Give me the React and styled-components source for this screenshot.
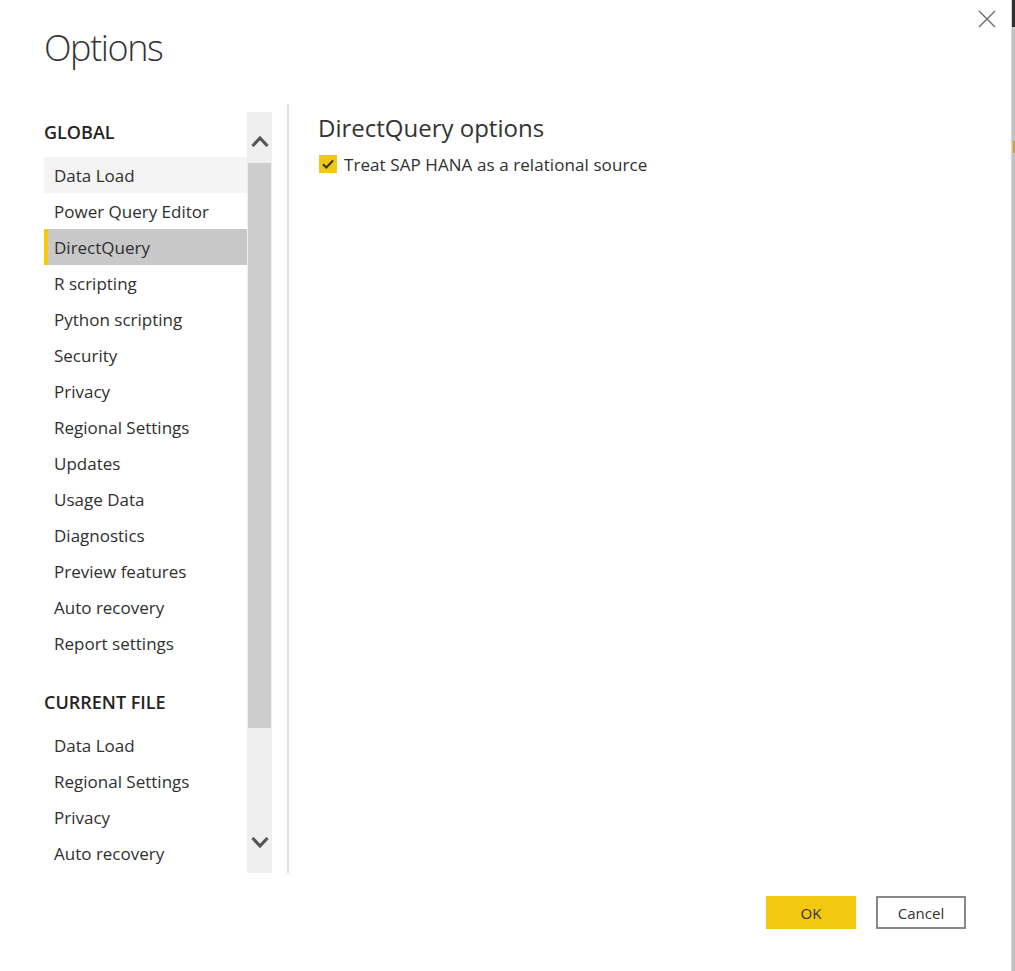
import React from "react";
import styled, { createGlobalStyle } from "styled-components";

const GlobalStyle = createGlobalStyle`
    html, body {
        margin: 0;
        padding: 0;
        background: #ffffff;
    }
    body {
        font-family: "Open Sans", "Liberation Sans", sans-serif;
        color: #333333;
    }
`;

const Page = styled.div`
    display: flex;
    width: 1015px;
    height: 971px;
    overflow: hidden;
`;

const Dialog = styled.div`
    display: flex;
    flex-direction: column;
    width: 1011px;
    height: 971px;
    background: #ffffff;
`;

const BackEdge = styled.div`
    display: flex;
    flex-direction: column;
    width: 4px;
    height: 971px;
    border-left: 1px solid #d6d6d6;
    box-sizing: border-box;
    background: #c3c3c3;
`;

const EdgeTop = styled.div`
    height: 27px;
    background: #2e2e2e;
`;

const EdgeMark = styled.div`
    align-self: flex-end;
    width: 2px;
    height: 12px;
    margin-top: 114px;
    background: #d99a3a;
`;

const Header = styled.div`
    display: flex;
    justify-content: space-between;
    align-items: flex-start;
    height: 104px;
    padding: 0 15px 0 44px;
`;

const Title = styled.h1`
    margin: 28px 0 0;
    font-weight: 300;
    font-size: 36px;
    line-height: 40px;
    letter-spacing: -1.4px;
    color: #333333;
`;

const CloseButton = styled.button`
    display: flex;
    margin-top: 10px;
    padding: 0;
    border: 0;
    background: none;
    cursor: pointer;
`;

const Body = styled.div`
    display: flex;
    height: 769px;
    padding-left: 44px;
`;

const NavPane = styled.div`
    display: flex;
    margin-top: 8px;
    height: 761px;
`;

const NavList = styled.div`
    width: 203px;
    display: flex;
    flex-direction: column;
`;

const GroupHeading = styled.div`
    display: flex;
    align-items: center;
    height: 40px;
    margin: ${(p) => (p.$first ? "0" : "21px")} 0 5px;
    font-size: 18px;
    font-weight: 600;
    color: #252423;
`;

const NavItem = styled.div`
    display: flex;
    align-items: center;
    height: 36px;
    padding-left: 6px;
    border-left: 4px solid ${(p) => (p.$selected ? "#f2c811" : "transparent")};
    font-size: 17px;
    color: #2f2f2f;
    background: ${(p) => (p.$selected ? "#c8c8c8" : p.$hover ? "#f4f4f4" : "transparent")};
    box-sizing: border-box;
`;

const ScrollTrack = styled.div`
    display: flex;
    flex-direction: column;
    width: 25px;
    background: #efefef;
`;

const ScrollTop = styled.div`
    display: flex;
    justify-content: center;
    align-items: flex-start;
    height: 51px;
    padding-top: 23px;
    box-sizing: border-box;
`;

const ScrollThumb = styled.div`
    height: 565px;
    margin: 0 1px;
    background: #cdcdcd;
`;

const ScrollRest = styled.div`
    flex: 1;
    display: flex;
    align-items: flex-end;
    justify-content: center;
    padding-bottom: 24px;
`;

const Divider = styled.div`
    width: 2px;
    margin-left: 15px;
    background: #e1e1e1;
`;

const Content = styled.div`
    display: flex;
    flex-direction: column;
    padding: 8px 0 0 29px;
`;

const SectionTitle = styled.h2`
    margin: 0;
    font-size: 24px;
    font-weight: 400;
    line-height: 32px;
    color: #333333;
`;

const CheckRow = styled.label`
    display: flex;
    align-items: center;
    gap: 7px;
    height: 24px;
    margin-top: 8px;
    font-size: 17px;
    letter-spacing: 0.08px;
    color: #2f2f2f;
`;

const CheckBox = styled.span`
    display: flex;
    width: 18px;
    height: 18px;
    margin-left: 1px;
    background: #f2c811;
`;

const Footer = styled.div`
    display: flex;
    justify-content: flex-end;
    gap: 20px;
    padding: 23px 45px 0 0;
`;

const Button = styled.button`
    width: 90px;
    height: 33px;
    box-sizing: border-box;
    font-family: "Open Sans", "Liberation Sans", sans-serif;
    font-size: 15px;
    color: #333333;
    cursor: pointer;
    background: ${(p) => (p.$primary ? "#f2c811" : "#ffffff")};
    border: ${(p) => (p.$primary ? "0" : "2px solid #888888")};
`;

const globalItems = [
    "Data Load",
    "Power Query Editor",
    "DirectQuery",
    "R scripting",
    "Python scripting",
    "Security",
    "Privacy",
    "Regional Settings",
    "Updates",
    "Usage Data",
    "Diagnostics",
    "Preview features",
    "Auto recovery",
    "Report settings",
];

const fileItems = ["Data Load", "Regional Settings", "Privacy", "Auto recovery"];

const Chevron = ({ up }) => (
    <svg width="18" height="13" viewBox="0 0 18 13">
        <path
            d={up ? "M1.5 11 L9 3 L16.5 11" : "M1.5 2 L9 10 L16.5 2"}
            fill="none"
            stroke="#555555"
            strokeWidth="3.2"
        />
    </svg>
);

export default function App() {
    return (
        <Page>
            <GlobalStyle />
            <Dialog>
                <Header>
                    <Title>Options</Title>
                    <CloseButton aria-label="Close">
                        <svg width="18" height="18" viewBox="0 0 18 18">
                            <path d="M1 1 L17 17 M17 1 L1 17" stroke="#6b6b6b" strokeWidth="1.4" />
                        </svg>
                    </CloseButton>
                </Header>

                <Body>
                    <NavPane>
                        <NavList>
                            <GroupHeading $first>GLOBAL</GroupHeading>
                            {globalItems.map((item, i) => (
                                <NavItem key={item} $hover={i === 0} $selected={item === "DirectQuery"}>
                                    {item}
                                </NavItem>
                            ))}
                            <GroupHeading>CURRENT FILE</GroupHeading>
                            {fileItems.map((item) => (
                                <NavItem key={item}>{item}</NavItem>
                            ))}
                        </NavList>
                        <ScrollTrack>
                            <ScrollTop>
                                <Chevron up />
                            </ScrollTop>
                            <ScrollThumb />
                            <ScrollRest>
                                <Chevron />
                            </ScrollRest>
                        </ScrollTrack>
                    </NavPane>

                    <Divider />

                    <Content>
                        <SectionTitle>DirectQuery options</SectionTitle>
                        <CheckRow>
                            <CheckBox>
                                <svg width="18" height="18" viewBox="0 0 18 18">
                                    <path d="M4 9.2 L7.3 12.5 L14 5.5" fill="none" stroke="#333333" strokeWidth="2" />
                                </svg>
                            </CheckBox>
                            Treat SAP HANA as a relational source
                        </CheckRow>
                    </Content>
                </Body>

                <Footer>
                    <Button $primary>OK</Button>
                    <Button>Cancel</Button>
                </Footer>
            </Dialog>
            <BackEdge>
                <EdgeTop />
                <EdgeMark />
            </BackEdge>
        </Page>
    );
}
